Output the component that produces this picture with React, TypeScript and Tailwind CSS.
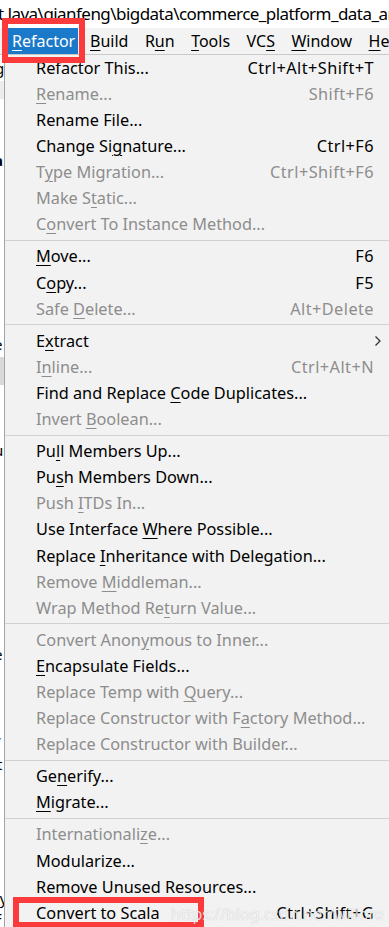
import React from "react";

type Entry =
  | { label: string; u?: number; shortcut?: string; off?: boolean; sub?: boolean }
  | "sep";

const items: Entry[] = [
  { label: "Refactor This...", shortcut: "Ctrl+Alt+Shift+T" },
  { label: "Rename...", u: 0, shortcut: "Shift+F6", off: true },
  { label: "Rename File..." },
  { label: "Change Signature...", u: 9, shortcut: "Ctrl+F6" },
  { label: "Type Migration...", u: 1, shortcut: "Ctrl+Shift+F6", off: true },
  { label: "Make Static...", u: 6, off: true },
  { label: "Convert To Instance Method...", u: 1, off: true },
  "sep",
  { label: "Move...", u: 0, shortcut: "F6" },
  { label: "Copy...", u: 1, shortcut: "F5" },
  { label: "Safe Delete...", u: 5, shortcut: "Alt+Delete", off: true },
  "sep",
  { label: "Extract", u: 1, sub: true },
  { label: "Inline...", u: 1, shortcut: "Ctrl+Alt+N", off: true },
  { label: "Find and Replace Code Duplicates...", u: 17 },
  { label: "Invert Boolean...", u: 7, off: true },
  "sep",
  { label: "Pull Members Up...", u: 2 },
  { label: "Push Members Down...", u: 2 },
  { label: "Push ITDs In...", u: 5, off: true },
  { label: "Use Interface Where Possible...", u: 14 },
  { label: "Replace Inheritance with Delegation...", u: 8 },
  { label: "Remove Middleman...", u: 7, off: true },
  { label: "Wrap Method Return Value...", u: 14, off: true },
  "sep",
  { label: "Convert Anonymous to Inner...", u: 12, off: true },
  { label: "Encapsulate Fields...", u: 0 },
  { label: "Replace Temp with Query...", u: 18, off: true },
  { label: "Replace Constructor with Factory Method...", u: 26, off: true },
  { label: "Replace Constructor with Builder...", off: true },
  "sep",
  { label: "Generify...", u: 2 },
  { label: "Migrate...", u: 0 },
  "sep",
  { label: "Internationalize...", u: 14, off: true },
  { label: "Modularize..." },
  { label: "Remove Unused Resources..." },
  { label: "Convert to Scala", shortcut: "Ctrl+Shift+G" },
];

const Mnemonic = ({ text, u }: { text: string; u?: number }) => {
  if (u === undefined) return <>{text}</>;
  return (
    <>
      {text.slice(0, u)}
      <span className="underline underline-offset-[3px]">{text[u]}</span>
      {text.slice(u + 1)}
    </>
  );
};

const bar = [
  { t: "Build", u: 0 },
  { t: "Run", u: 1 },
  { t: "Tools", u: 0 },
  { t: "VCS", u: 2 },
  { t: "Window", u: 0 },
  { t: "Help", u: 0 },
];

export default function App() {
  return (
    <div
      className="relative w-[389px] h-[927px] overflow-hidden bg-white text-black"
      style={{ fontFamily: '"Noto Sans", "Liberation Sans", sans-serif' }}
    >
      {/* window title */}
      <div className="h-[28px] bg-white whitespace-nowrap text-[17px] tracking-[-0.55px] leading-[28px] -ml-[2px]">
        t Java\qianfeng\bigdata\commerce_platform_data_analysis
      </div>

      {/* menu bar */}
      <div className="h-[27px] flex items-stretch bg-[#f3f3f3] border-b border-[#c9c9c9] text-[16px] whitespace-nowrap">
        <div className="ml-[8px] px-[4px] bg-[#1a79c8] text-white flex items-center w-[70px]">
          <Mnemonic text="Refactor" u={0} />
        </div>
        <div className="flex items-center gap-[16.5px] ml-[12px]">
          {bar.map((b) => (
            <span key={b.t}>
              <Mnemonic text={b.t} u={b.u} />
            </span>
          ))}
        </div>
      </div>

      <div className="flex">
        {/* editor behind the menu */}
        <div className="relative w-[4px] h-[872px] bg-white overflow-hidden text-[15px] leading-none">
          <div className="absolute left-0 top-[26px] w-[4px] h-[18px] bg-[#ececec]" />
          <div className="absolute left-0 top-[302px] w-[4px] h-[28px] bg-[#d9d9d9]" />
          <span className="absolute -left-[5px] top-[6px]">g</span>
          <span className="absolute -left-[6px] top-[98px] font-bold">a</span>
          <span className="absolute -left-[6px] top-[282px]">e</span>
          <span className="absolute -left-[6px] top-[388px]">u</span>
          <span className="absolute -left-[6px] top-[592px]">e</span>
          <span className="absolute -left-[7px] top-[678px]">v</span>
          <span className="absolute -left-[3px] top-[702px]">t</span>
          <span className="absolute -left-[4px] top-[836px]">ly</span>
          <span className="absolute -left-[6px] top-[856px]">F</span>
        </div>

        {/* dropdown */}
        <div className="flex-1 bg-[#f2f2f2] border-l border-[#a5a5a5] text-[16.3px] whitespace-nowrap">
          {items.map((it, i) =>
            it === "sep" ? (
              <div key={i} className="h-[6px] flex items-center">
                <div className="h-px w-full bg-[#d1d1d1]" />
              </div>
            ) : (
              <div
                key={i}
                className={`h-[26.1px] flex items-center pl-[31px] pr-[15px] ${
                  it.off ? "text-[#8d8d8d]" : "text-black"
                }`}
              >
                <span className="flex-1">
                  <Mnemonic text={it.label} u={it.u} />
                </span>
                {it.shortcut && <span className="tracking-[0.45px]">{it.shortcut}</span>}
                {it.sub && (
                  <svg width="8" height="12" viewBox="0 0 8 12" className="-mr-[8px]">
                    <path d="M1.5 1.5 L6 6 L1.5 10.5" fill="none" stroke="#333" strokeWidth="1.3" />
                  </svg>
                )}
              </div>
            )
          )}
        </div>
      </div>

      {/* annotation boxes */}
      <div className="absolute left-[2px] top-[18px] w-[83px] h-[45px] border-[6px] border-[#fb3b3b]" />
      <div className="absolute left-[13px] top-[897px] w-[191px] h-[31px] border-[6px] border-[#fb3b3b]" />

      {/* watermark */}
      <div
        className="absolute left-[171px] top-[902px] text-[16px] text-white/80 whitespace-nowrap"
        style={{ textShadow: "0 0 1px rgba(0,0,0,0.25)" }}
      >
        https://blog.csdn.net/willore
      </div>
    </div>
  );
}
